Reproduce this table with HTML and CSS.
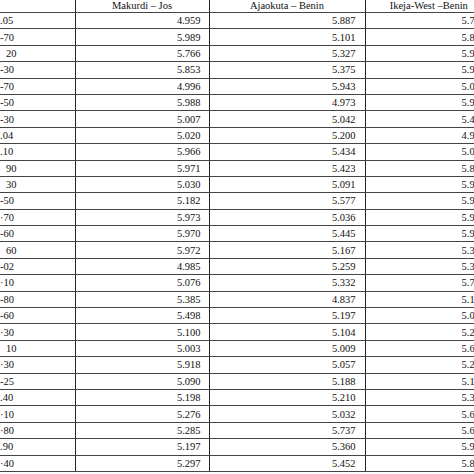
FILE: index.html
```html
<!DOCTYPE html>
<html>
<head>
<meta charset="utf-8">
<link rel="stylesheet" href="styles.css">
</head>
<body>
<div class="frame">
<table class="data">
<colgroup><col class="c1"><col class="c2"><col class="c3"><col class="c4"></colgroup>
<thead>
<tr class="head"><th></th><th>Makurdi – Jos</th><th>Ajaokuta – Benin</th><th>Ikeja-West –Benin</th></tr>
</thead>
<tbody>
<tr><td>.05</td><td>4.959</td><td>5.887</td><td>5.7</td></tr>
<tr><td>-70</td><td>5.989</td><td>5.101</td><td>5.8</td></tr>
<tr><td class="in">20</td><td>5.766</td><td>5.327</td><td>5.9</td></tr>
<tr><td>-30</td><td>5.853</td><td>5.375</td><td>5.9</td></tr>
<tr><td>-70</td><td>4.996</td><td>5.943</td><td>5.0</td></tr>
<tr><td>-50</td><td>5.988</td><td>4.973</td><td>5.9</td></tr>
<tr><td>-30</td><td>5.007</td><td>5.042</td><td>5.4</td></tr>
<tr><td>.04</td><td>5.020</td><td>5.200</td><td>4.9</td></tr>
<tr><td>.10</td><td>5.966</td><td>5.434</td><td>5.0</td></tr>
<tr><td class="in">90</td><td>5.971</td><td>5.423</td><td>5.8</td></tr>
<tr><td class="in">30</td><td>5.030</td><td>5.091</td><td>5.9</td></tr>
<tr><td>-50</td><td>5.182</td><td>5.577</td><td>5.9</td></tr>
<tr><td>·70</td><td>5.973</td><td>5.036</td><td>5.9</td></tr>
<tr><td>-60</td><td>5.970</td><td>5.445</td><td>5.9</td></tr>
<tr><td class="in">60</td><td>5.972</td><td>5.167</td><td>5.3</td></tr>
<tr><td>-02</td><td>4.985</td><td>5.259</td><td>5.3</td></tr>
<tr><td>·10</td><td>5.076</td><td>5.332</td><td>5.7</td></tr>
<tr><td>-80</td><td>5.385</td><td>4.837</td><td>5.1</td></tr>
<tr><td>-60</td><td>5.498</td><td>5.197</td><td>5.0</td></tr>
<tr><td>·30</td><td>5.100</td><td>5.104</td><td>5.2</td></tr>
<tr><td class="in">10</td><td>5.003</td><td>5.009</td><td>5.6</td></tr>
<tr><td>·30</td><td>5.918</td><td>5.057</td><td>5.2</td></tr>
<tr><td>-25</td><td>5.090</td><td>5.188</td><td>5.1</td></tr>
<tr><td>.40</td><td>5.198</td><td>5.210</td><td>5.3</td></tr>
<tr><td>·10</td><td>5.276</td><td>5.032</td><td>5.6</td></tr>
<tr><td>·80</td><td>5.285</td><td>5.737</td><td>5.6</td></tr>
<tr><td>.90</td><td>5.197</td><td>5.360</td><td>5.9</td></tr>
<tr><td>·40</td><td>5.297</td><td>5.452</td><td>5.8</td></tr>
</tbody>
</table>
</div>
</body>
</html>
```
FILE: styles.css
```css
html, body {
  margin: 0;
  padding: 0;
  background: #ffffff;
}
.frame {
  width: 474px;
  height: 474px;
  overflow: hidden;
}
.data {
  border-collapse: collapse;
  table-layout: fixed;
  width: 492px;
  font-family: "Liberation Serif", "Times New Roman", serif;
  font-size: 10.5px;
  color: #111111;
}
.c1 { width: 75px; }
.c2 { width: 134px; }
.c3 { width: 156px; }
.c4 { width: 127px; }
.data th {
  font-weight: normal;
  text-align: center;
  height: 12px;
  padding: 0;
  line-height: 12px;
  border-left: 1px solid #262626;
  border-bottom: 1px solid #444444;
  white-space: nowrap;
}
.data th:first-child { border-left: none; }
.data td {
  height: 15.4px;
  padding: 0 8px 0 0;
  line-height: 15px;
  text-align: right;
  border-left: 1px solid #262626;
  border-bottom: 1px solid #444444;
  white-space: nowrap;
}
.data td:first-child {
  border-left: none;
  text-align: left;
  padding: 0;
}
.data td.in { padding-left: 6px; }
.data td:nth-child(3) { padding-right: 9px; }
.data td:nth-child(4) { text-align: left; padding: 0 0 0 96px; }
```
